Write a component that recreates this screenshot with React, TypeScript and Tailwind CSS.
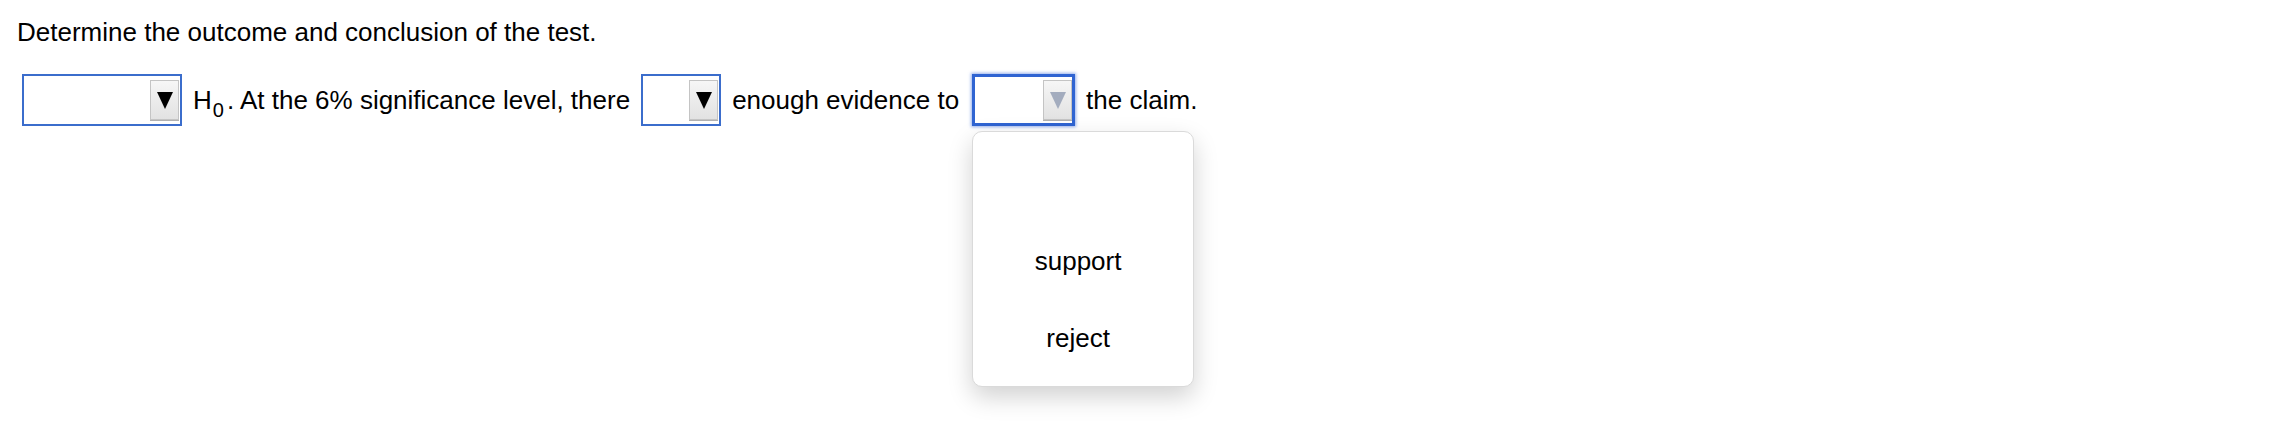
import React from 'react';

const font = { fontFamily: '"Liberation Sans", Arial, sans-serif' };

const Arrow: React.FC<{ muted?: boolean }> = ({ muted }) => (
  <svg width="16" height="17" viewBox="0 0 16 17">
    <polygon points="0,0 16,0 8,17" fill={muted ? '#a3acbe' : '#000'} />
  </svg>
);

const DropButton: React.FC<{ muted?: boolean }> = ({ muted }) => (
  <div className="flex h-[40px] w-[29px] items-center justify-center border border-[#c4c4c4] bg-gradient-to-b from-[#f6f6f6] to-[#e2e2e2] shadow-[0_1px_0_#b0b0b0]">
    <Arrow muted={muted} />
  </div>
);

const Select: React.FC<{ width: string }> = ({ width }) => (
  <div className={`flex h-[52px] ${width} shrink-0 items-center justify-end border-2 border-[#3b6dcc] bg-white pr-px`}>
    <DropButton />
  </div>
);

const App: React.FC = () => {
  return (
    <div className="min-h-screen bg-white text-[26px] text-black" style={font}>
      <p className="pl-[17px] pt-[17px] leading-[30px]">Determine the outcome and conclusion of the test.</p>

      <div className="mt-[27px] flex items-center gap-[11px] pl-[22px] leading-[30px]">
        <Select width="w-[160px]" />
        <span className="whitespace-nowrap">
          H<sub className="bottom-[-8px] pl-px pr-[3px] text-[20px]">0</sub>. At the 6% significance level, there
        </span>
        <Select width="w-[80px]" />
        <span className="whitespace-nowrap">enough evidence to</span>

        {/* open dropdown */}
        <div className="relative ml-[2px] shrink-0">
          <div className="flex h-[52px] w-[103px] items-center justify-end border-[3px] border-[#2f64d2] bg-white shadow-[0_0_3px_1px_rgba(59,109,220,0.55)]">
            <DropButton muted />
          </div>
          <div className="absolute left-0 top-full z-10 mt-[5px] w-[222px] rounded-[10px] border border-[#dadada] bg-white pb-[10px] pt-[13px] pr-[10px] shadow-[0_10px_24px_rgba(0,0,0,0.18)]">
            <div className="h-[77px]" />
            <div className="flex h-[77px] items-center justify-center">support</div>
            <div className="flex h-[77px] items-center justify-center">reject</div>
          </div>
        </div>

        <span className="whitespace-nowrap">the claim.</span>
      </div>
    </div>
  );
};

export default App;
